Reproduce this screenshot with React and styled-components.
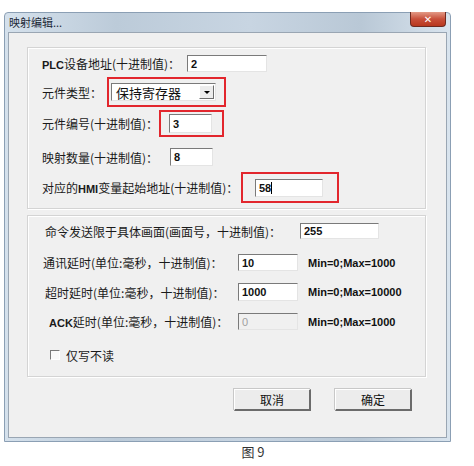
import React from "react";
import styled, { createGlobalStyle } from "styled-components";

const GlobalStyle = createGlobalStyle`
    body {
        margin: 0;
        background: #ffffff;
        font-family: "Noto Sans CJK SC", "Noto Sans", sans-serif;
    }
`;

const Page = styled.div`
    width: 474px;
    height: 466px;
    padding: 12px 0 0 4px;
    box-sizing: border-box;
    display: flex;
    flex-direction: column;
`;

const Window = styled.div`
    width: 447px;
    height: 430px;
    box-sizing: border-box;
    border: 1px solid #8b9fb4;
    border-radius: 4px 4px 0 0;
    background: linear-gradient(to right, #d5e1ec, #bccbd9 25%, #c8d5e2 55%, #b9c8d6 80%, #d9e4ee);
    padding: 0 3px 3px 3px;
    display: flex;
    flex-direction: column;
`;

const TitleBar = styled.div`
    height: 19px;
    display: flex;
    align-items: flex-start;
    justify-content: space-between;
`;

const Title = styled.div`
    font-size: 11px;
    color: #1d2a38;
    padding: 3px 0 0 1px;
    line-height: 13px;
`;

const CloseButton = styled.div`
    width: 36px;
    height: 15px;
    margin-top: -1px;
    margin-right: 1px;
    box-sizing: border-box;
    border: 1px solid #6f2a20;
    border-top: none;
    border-radius: 0 0 4px 4px;
    background: linear-gradient(#e39a86, #c8503b 50%, #b8381f);
    color: #fff;
    font-family: "DejaVu Sans", sans-serif;
    font-weight: bold;
    font-size: 10px;
    display: flex;
    align-items: center;
    justify-content: center;
`;

const Client = styled.div`
    flex: 1;
    border: 1px solid #9aa6b3;
    background: #f0f0f0;
    padding: 14px 20px 0 18px;
    display: flex;
    flex-direction: column;
`;

const Group = styled.div`
    height: ${p => p.$h}px;
    margin-top: ${p => p.$mt}px;
    box-sizing: border-box;
    border: 1px solid #d4d4d4;
    box-shadow: inset 1px 1px 0 #ffffff, 1px 1px 0 #ffffff;
    display: flex;
    flex-direction: column;
`;

const Row = styled.div`
    display: flex;
    align-items: center;
    height: ${p => p.$h}px;
    margin-top: ${p => p.$mt}px;
    padding-left: ${p => p.$indent}px;
`;

const Label = styled.div`
    width: ${p => p.$w}px;
    flex-shrink: 0;
    font-size: 12px;
    color: #1a1a1a;
    white-space: nowrap;
    b {
        font-family: "Liberation Sans", sans-serif;
        font-size: 11px;
    }
`;

const TextBox = styled.div`
    width: ${p => p.$w}px;
    height: ${p => p.$h}px;
    box-sizing: border-box;
    border-top: 1px solid #7a7a7a;
    border-left: 1px solid #7a7a7a;
    border-right: 1px solid #e4e4e4;
    border-bottom: 1px solid #e4e4e4;
    background: ${p => (p.$disabled ? "#f0f0f0" : "#ffffff")};
    color: ${p => (p.$disabled ? "#a0a0a0" : "#111")};
    font-family: "Liberation Sans", sans-serif;
    font-weight: ${p => (p.$disabled ? "normal" : "bold")};
    font-size: 11px;
    padding-left: 3px;
    display: flex;
    align-items: center;
`;

const Caret = styled.span`
    display: inline-block;
    width: 1px;
    height: 12px;
    background: #000;
`;

const RedFrame = styled.div`
    width: ${p => p.$w}px;
    height: ${p => p.$h}px;
    box-sizing: border-box;
    border: 2px solid #e2262d;
    padding-left: ${p => p.$pl}px;
    display: flex;
    align-items: center;
`;

const Select = styled.div`
    width: 105px;
    height: 18px;
    box-sizing: border-box;
    border-top: 1px solid #7a7a7a;
    border-left: 1px solid #7a7a7a;
    border-right: 1px solid #e4e4e4;
    border-bottom: 1px solid #e4e4e4;
    background: #fff;
    display: flex;
    align-items: center;
    justify-content: space-between;
    font-size: 13px;
    color: #111;
    padding-left: 4px;
`;

const DropArrow = styled.div`
    width: 15px;
    height: 14px;
    margin-right: 1px;
    box-sizing: border-box;
    background: #ececec;
    border-top: 1px solid #ffffff;
    border-left: 1px solid #ffffff;
    border-right: 1px solid #6d6d6d;
    border-bottom: 1px solid #6d6d6d;
    display: flex;
    align-items: center;
    justify-content: center;
    &::after {
        content: "";
        border-left: 3px solid transparent;
        border-right: 3px solid transparent;
        border-top: 3px solid #000;
    }
`;

const Range = styled.div`
    margin-left: 10px;
    font-family: "Liberation Sans", sans-serif;
    font-weight: bold;
    font-size: 11px;
    color: #111;
`;

const Check = styled.div`
    width: 10px;
    height: 10px;
    box-sizing: border-box;
    border-top: 1px solid #7a7a7a;
    border-left: 1px solid #7a7a7a;
    border-right: 1px solid #ffffff;
    border-bottom: 1px solid #ffffff;
    background: #fafafa;
    margin-right: 6px;
`;

const CheckText = styled.div`
    font-size: 12px;
    color: #1a1a1a;
`;

const ButtonRow = styled.div`
    display: flex;
    justify-content: flex-end;
    gap: 24px;
    margin-top: 12px;
    padding-right: 14px;
`;

const Button = styled.div`
    width: 77px;
    height: 22px;
    box-sizing: border-box;
    background: #ececec;
    border-top: 1px solid #ffffff;
    border-left: 1px solid #ffffff;
    border-right: 2px solid #6b6b6b;
    border-bottom: 2px solid #6b6b6b;
    box-shadow: -1px -1px 0 #c8c8c8;
    display: flex;
    align-items: center;
    justify-content: center;
    font-size: 12px;
    color: #111;
`;

const Caption = styled.div`
    width: 447px;
    text-align: center;
    margin-top: 1px;
    font-family: "Noto Sans CJK SC", "Liberation Serif", serif;
    font-size: 13px;
    line-height: 18px;
    color: #333;
    padding-left: 51px;
    box-sizing: border-box;
`;

export default function App(){
    return(
        <>
            <GlobalStyle />
            <Page>
                <Window>
                    <TitleBar>
                        <Title>映射编辑...</Title>
                        <CloseButton>✕</CloseButton>
                    </TitleBar>
                    <Client>
                        <Group $h={162} $mt={0}>
                            <Row $h={17} $mt={7} $indent={14}>
                                <Label $w={145}><b>PLC</b>设备地址(十进制值)：</Label>
                                <TextBox $w={80} $h={17}>2</TextBox>
                            </Row>
                            <Row $h={30} $mt={5} $indent={14}>
                                <Label $w={65}>元件类型：</Label>
                                <RedFrame $w={119} $h={30} $pl={2}>
                                    <Select>保持寄存器<DropArrow /></Select>
                                </RedFrame>
                            </Row>
                            <Row $h={27} $mt={3} $indent={14}>
                                <Label $w={117}>元件编号(十进制值)：</Label>
                                <RedFrame $w={65} $h={27} $pl={8}>
                                    <TextBox $w={43} $h={19}>3</TextBox>
                                </RedFrame>
                            </Row>
                            <Row $h={18} $mt={11} $indent={14}>
                                <Label $w={128}>映射数量(十进制值)：</Label>
                                <TextBox $w={43} $h={18}>8</TextBox>
                            </Row>
                            <Row $h={31} $mt={6} $indent={14}>
                                <Label $w={199}>对应的<b>HMI</b>变量起始地址(十进制值)：</Label>
                                <RedFrame $w={98} $h={31} $pl={12}>
                                    <TextBox $w={68} $h={18}>58<Caret /></TextBox>
                                </RedFrame>
                            </Row>
                        </Group>
                        <Group $h={162} $mt={6}>
                            <Row $h={16} $mt={7} $indent={17}>
                                <Label $w={255}>命令发送限于具体画面(画面号，十进制值)：</Label>
                                <TextBox $w={79} $h={16}>255</TextBox>
                            </Row>
                            <Row $h={17} $mt={15} $indent={15}>
                                <Label $w={195}>通讯延时(单位:毫秒，十进制值)：</Label>
                                <TextBox $w={60} $h={17}>10</TextBox>
                                <Range>Min=0;Max=1000</Range>
                            </Row>
                            <Row $h={18} $mt={12} $indent={17}>
                                <Label $w={193}>超时延时(单位:毫秒，十进制值)：</Label>
                                <TextBox $w={60} $h={18}>1000</TextBox>
                                <Range>Min=0;Max=10000</Range>
                            </Row>
                            <Row $h={17} $mt={12} $indent={21}>
                                <Label $w={189}><b>ACK</b>延时(单位:毫秒，十进制值)：</Label>
                                <TextBox $w={60} $h={17} $disabled>0</TextBox>
                                <Range>Min=0;Max=1000</Range>
                            </Row>
                            <Row $h={14} $mt={18} $indent={22}>
                                <Check />
                                <CheckText>仅写不读</CheckText>
                            </Row>
                        </Group>
                        <ButtonRow>
                            <Button>取消</Button>
                            <Button>确定</Button>
                        </ButtonRow>
                    </Client>
                </Window>
                <Caption>图 9</Caption>
            </Page>
        </>
    );
}
